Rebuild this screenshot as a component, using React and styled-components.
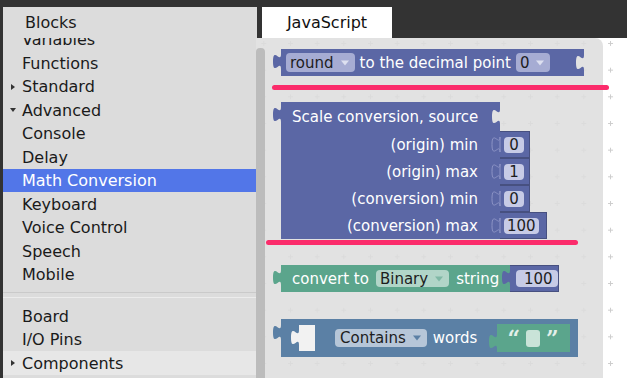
import React from "react";
import styled, { createGlobalStyle } from "styled-components";

const GlobalStyle = createGlobalStyle`
  html, body {
    margin: 0;
    padding: 0;
    background: #333;
  }
  body {
    font-family: "DejaVu Sans", "Liberation Sans", sans-serif;
    overflow: hidden;
  }
`;

const MATH = "#5b67a5";
const TEXT = "#5ba58c";
const LIST = "#5b80a5";
const FLY_BG = "#e2e2e2";

const Page = styled.div`
  display: grid;
  grid-template-columns: 254px 1fr;
  grid-template-rows: 31px 1fr;
  column-gap: 5px;
  height: 100vh;
  box-sizing: border-box;
  padding: 7px 0 0 3px;
  background: #333;
`;

/* ---------- toolbox ---------- */

const Sidebar = styled.aside`
  grid-row: 1 / 3;
  display: flex;
  flex-direction: column;
  background: #dcdcdc;
  color: #1a1a1a;
  font-size: 16px;
  overflow: hidden;
`;

const SideHeader = styled.div`
  flex: none;
  height: 31px;
  display: flex;
  align-items: center;
  padding-left: 22px;
`;

const SideList = styled.div`
  flex: 1;
  overflow: hidden;
`;

const ListInner = styled.div`
  display: flex;
  flex-direction: column;
  margin-top: -10.25px;
`;

const Item = styled.div`
  height: 23.5px;
  display: grid;
  grid-template-columns: 19px 1fr;
  align-items: center;
  background: ${(p) => (p.$selected ? "#5276e8" : p.$hover ? "#e7e7e7" : "transparent")};
  color: ${(p) => (p.$selected ? "#fff" : "inherit")};
`;

const Caret = styled.span`
  justify-self: center;
  width: 0;
  height: 0;
  border-style: solid;
  ${(p) =>
    p.$open
      ? "border-width: 4px 3px 0 3px; border-color: #333 transparent transparent transparent;"
      : "border-width: 3px 0 3px 4px; border-color: transparent transparent transparent #333;"}
`;

const Divider = styled.div`
  height: 18px;
  display: flex;
  flex-direction: column;
  justify-content: center;
  &::before {
    content: "";
    height: 4px;
    border-top: 1px solid #cacaca;
    border-bottom: 1px solid #ececec;
  }
`;

/* ---------- tabs + workspace ---------- */

const TabBar = styled.div`
  display: flex;
`;

const Tab = styled.div`
  width: 130px;
  background: #fff;
  color: #111;
  font-size: 16px;
  display: flex;
  align-items: center;
  justify-content: center;
`;

const Workspace = styled.div`
  position: relative;
  margin-left: -6px;
  background: #fff;
  overflow: hidden;
  display: flex;
`;

const GridSvg = styled.svg`
  position: absolute;
  inset: 0;
  width: 100%;
  height: 100%;
`;

const Flyout = styled.div`
  position: relative;
  width: 347px;
  display: flex;
  background: rgba(221, 221, 221, 0.85);
  border-top-right-radius: 8px;
`;

const ScrollStrip = styled.div`
  flex: none;
  width: 9px;
  margin-top: 10px;
  background: #bcbcbc;
  border-radius: 4px 4px 0 0;
`;

const Column = styled.div`
  display: flex;
  flex-direction: column;
  align-items: flex-start;
  padding-left: 7px;
`;

const PinkLine = styled.div`
  height: 5px;
  width: ${(p) => p.$w}px;
  margin-top: ${(p) => p.$top}px;
  margin-left: ${(p) => p.$left || 0}px;
  border-radius: 3px;
  background: #fb2c6b;
`;

/* ---------- blocks ---------- */

const Block = styled.div`
  display: flex;
  align-items: flex-start;
  margin-top: ${(p) => p.$top}px;
`;

const Stack = styled.div`
  display: flex;
  flex-direction: column;
`;

const Row = styled.div`
  display: flex;
  align-items: flex-start;
`;

const Body = styled.div`
  display: flex;
  align-items: center;
  justify-content: ${(p) => (p.$right ? "flex-end" : "flex-start")};
  gap: ${(p) => p.$gap ?? 5}px;
  box-sizing: border-box;
  width: ${(p) => p.$w}px;
  height: ${(p) => p.$h}px;
  padding-left: ${(p) => p.$pl ?? 5}px;
  padding-right: ${(p) => p.$pr ?? 0}px;
  background: ${(p) => p.$color};
  color: #fff;
  font-size: 15px;
  white-space: nowrap;
`;

const ValueBody = styled.div`
  display: flex;
  align-items: center;
  box-sizing: border-box;
  width: ${(p) => p.$w}px;
  height: ${(p) => p.$h}px;
  padding-left: ${(p) => p.$pl ?? 4}px;
  background: ${(p) => p.$color};
  border: 1px solid rgba(0, 0, 0, 0.22);
  border-left: none;
`;

const TabSvg = styled.svg`
  flex: none;
  width: 9px;
  height: 15px;
  overflow: visible;
  margin-top: ${(p) => p.$top ?? 5}px;
  margin-left: ${(p) => p.$ml ?? 0}px;
  position: relative;
`;

const NotchSvg = styled(TabSvg)`
  align-self: flex-start;
  margin-left: auto;
`;

const TAB_PATH = "M9,15 C9,5 1,23 1,7.5 C1,-8 9,10 9,0 Z";

const Knob = ({ color, top, ml, stroke }) => (
  <TabSvg viewBox="0 0 9 15" $top={top} $ml={ml}>
    <path d={TAB_PATH} fill={color} stroke={stroke || "none"} strokeWidth="1" />
  </TabSvg>
);

const Notch = ({ top }) => (
  <NotchSvg viewBox="0 0 9 15" $top={top}>
    <path d={TAB_PATH} fill={FLY_BG} />
  </NotchSvg>
);

const Field = styled.span`
  display: inline-flex;
  align-items: center;
  justify-content: ${(p) => (p.$center ? "center" : "flex-start")};
  gap: 6px;
  box-sizing: border-box;
  height: ${(p) => p.$h || 19}px;
  min-width: ${(p) => p.$min || 0}px;
  margin-left: ${(p) => p.$ml || 0}px;
  padding: 0 ${(p) => p.$pr ?? 5}px 0 ${(p) => p.$pl ?? 4}px;
  border-radius: 4px;
  background: ${(p) => p.$bg};
  color: #1d1d1d;
  font-size: 15px;
`;

const ArrowSvg = styled.svg`
  width: 10px;
  height: 6px;
`;

const Arrow = ({ color }) => (
  <ArrowSvg viewBox="0 0 10 6">
    <path d="M1,0.5 H9 L5,5.5 Z" fill={color} />
  </ArrowSvg>
);

const Hole = styled.div`
  display: flex;
  align-items: flex-start;
  height: 26px;
`;

const HoleFill = styled.div`
  width: 16px;
  height: 26px;
  background: #f2f2f2;
`;

const Quote = styled.span`
  align-self: flex-start;
  margin-top: 3px;
  color: #e3efe9;
  font-size: 22px;
  font-weight: bold;
  font-family: "DejaVu Serif", serif;
  line-height: 22px;
`;

const TextSlot = styled.span`
  width: 14px;
  height: 17px;
  border-radius: 3px;
  background: #c9e3d8;
`;

const Label = styled.span`
  margin-left: ${(p) => p.$ml || 0}px;
`;

const categories = [
  { name: "Variables" },
  { name: "Functions" },
  { name: "Standard", caret: "closed" },
  { name: "Advanced", caret: "open" },
  { name: "Console" },
  { name: "Delay" },
  { name: "Math Conversion", selected: true },
  { name: "Keyboard" },
  { name: "Voice Control" },
  { name: "Speech" },
  { name: "Mobile" },
  { divider: true },
  { name: "Board" },
  { name: "I/O Pins" },
  { name: "Components", caret: "closed", hover: true },
];

const scaleRows = [
  { label: "(origin) min", value: "0", w: 30 },
  { label: "(origin) max", value: "1", w: 30 },
  { label: "(conversion) min", value: "0", w: 30 },
  { label: "(conversion) max", value: "100", w: 47 },
];

const NumField = ({ children }) => (
  <Field $bg="#c7cbe6" $h={16} $min={20} $pl={3} $pr={3} $center>
    {children}
  </Field>
);

const Grid = () => (
  <GridSvg>
    <defs>
      <pattern id="dots" x="32" y="3" width="26.67" height="26.67" patternUnits="userSpaceOnUse">
        <path d="M0 2.5 H5 M2.5 0 V5" stroke="#cdcdcd" strokeWidth="1" />
      </pattern>
    </defs>
    <rect width="100%" height="100%" fill="url(#dots)" />
  </GridSvg>
);

export default function App() {
  return (
    <>
      <GlobalStyle />
      <Page>
        <Sidebar>
          <SideHeader>Blocks</SideHeader>
          <SideList>
            <ListInner>
              {categories.map((c, i) =>
                c.divider ? (
                  <Divider key={i} />
                ) : (
                  <Item key={c.name} $selected={c.selected} $hover={c.hover}>
                    {c.caret ? <Caret $open={c.caret === "open"} /> : <span />}
                    <span>{c.name}</span>
                  </Item>
                )
              )}
            </ListInner>
          </SideList>
        </Sidebar>

        <TabBar>
          <Tab>JavaScript</Tab>
        </TabBar>

        <Workspace>
          <Grid />
          <Flyout>
            <ScrollStrip />
            <Column>
              {/* round to decimal point */}
              <Block $top={11}>
                <Knob color={MATH} />
                <Body $w={303} $h={27} $color={MATH}>
                  <Field $bg="#a6acd3">
                    round <Arrow color="#dde0f0" />
                  </Field>
                  <Label>to the decimal point</Label>
                  <Field $bg="#a6acd3">
                    0 <Arrow color="#dde0f0" />
                  </Field>
                  <Notch top={6} />
                </Body>
              </Block>

              <PinkLine $top={9} $w={337} />

              {/* scale conversion */}
              <Block $top={12}>
                <Knob color={MATH} />
                <Stack>
                  <Body $w={219} $h={29} $pl={11} $color={MATH}>
                    <Label>Scale conversion, source</Label>
                    <Notch top={7} />
                  </Body>
                  {scaleRows.map((r) => (
                    <Row key={r.label}>
                      <Body $w={219} $h={27} $pr={22} $right $color={MATH}>
                        <Label>{r.label}</Label>
                      </Body>
                      <Knob color={MATH} top={6} ml={-9} stroke="#8d94c6" />
                      <ValueBody $w={r.w} $h={27} $color={MATH}>
                        <NumField>{r.value}</NumField>
                      </ValueBody>
                    </Row>
                  ))}
                </Stack>
              </Block>

              <PinkLine $top={1} $left={-6} $w={312} />

              {/* convert to binary string */}
              <Block $top={20}>
                <Knob color={TEXT} />
                <Body $w={229} $h={27} $pl={11} $gap={7} $color={TEXT}>
                  <Label>convert to</Label>
                  <Field $bg="#b1d5c8" $h={17}>
                    Binary <Arrow color="#7fb8a5" />
                  </Field>
                  <Label>string</Label>
                </Body>
                <Knob color={MATH} top={5} ml={-9} />
                <ValueBody $w={49} $h={27} $pl={6} $color={MATH}>
                  <Field $bg="#c7cbe6" $h={17} $pl={8} $pr={8}>
                    100
                  </Field>
                </ValueBody>
              </Block>

              {/* contains words */}
              <Block $top={27}>
                <Knob color={LIST} top={6} />
                <Body $w={297} $h={38} $pl={9} $gap={0} $color={LIST}>
                  <Hole>
                    <Knob color="#f2f2f2" top={5} />
                    <HoleFill />
                  </Hole>
                  <Field $bg="#b6c6d8" $h={18} $pl={5} $ml={20}>
                    Contains <Arrow color="#5b80a5" />
                  </Field>
                  <Label $ml={6}>words</Label>
                  <Knob color={TEXT} top={6} ml={11} />
                  <Body $w={73} $h={28} $pl={10} $gap={6} $color={TEXT}>
                    <Quote>“</Quote>
                    <TextSlot />
                    <Quote>”</Quote>
                  </Body>
                </Body>
              </Block>
            </Column>
          </Flyout>
        </Workspace>
      </Page>
    </>
  );
}
